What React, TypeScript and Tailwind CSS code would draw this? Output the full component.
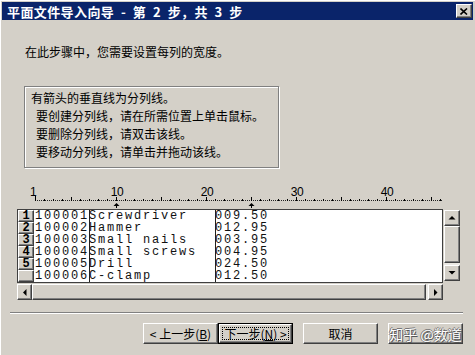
import React from "react";

// Win2000 wizard step 2: fixed-width column break editor

const CJK = "font-['Noto_Sans_CJK_SC',sans-serif]";
const RAISED =
  "border border-t-white border-l-white border-r-[#404040] border-b-[#404040] shadow-[inset_-1px_-1px_0_#808080]";

const ROWS = [
  "100001Screwdriver   009.50",
  "100002Hammer        012.95",
  "100003Small nails   003.95",
  "100004Small screws  004.95",
  "100005Drill         024.50",
  "100006C-clamp       012.50",
];

const colX = (n: number) => 35 + (n - 1) * 9;

function Ruler() {
  const ticks = Array.from({ length: 46 }, (_, i) => i + 1);
  return (
    <svg width={460} height={25} className="block">
      {[1, 10, 20, 30, 40].map((n) => (
        <text
          key={n}
          x={n === 1 ? colX(n) - 2 : colX(n) + 1}
          y={12}
          textAnchor="middle"
          fontSize={12}
          letterSpacing={-0.5}
          fontFamily="'Liberation Sans', sans-serif"
          fill="#000"
        >
          {n}
        </text>
      ))}
      <line x1={35} y1={16.5} x2={442} y2={16.5} stroke="#222" strokeWidth={1} strokeDasharray="1 1" />
      {ticks.map((n) => {
        const h = n === 1 ? 4 : n % 5 === 0 ? 3 : 1;
        const x = colX(n) + 0.5;
        return <line key={n} x1={x} y1={17} x2={x} y2={16 - h} stroke="#000" strokeWidth={1} />;
      })}
      {[colX(10), colX(25)].map((x) => (
        <g key={x} fill="#000">
          <polygon points={`${x - 2.5},22 ${x + 3.5},22 ${x + 0.5},19`} />
          <rect x={x} y={21} width={1} height={3} />
        </g>
      ))}
    </svg>
  );
}

function Arrow({ dir }: { dir: "up" | "down" | "left" | "right" }) {
  const pts = {
    up: "1.5,5.5 8.5,5.5 5,2",
    down: "1.5,2 8.5,2 5,5.5",
    left: "5.5,1 5.5,8 2,4.5",
    right: "2,1 2,8 5.5,4.5",
  }[dir];
  const w = dir === "up" || dir === "down" ? 10 : 8;
  const h = dir === "up" || dir === "down" ? 8 : 9;
  return (
    <svg width={w} height={h} viewBox={`0 0 ${w} ${h}`}>
      <polygon points={pts} fill="#000" />
    </svg>
  );
}

function ScrollBtn({ dir, className }: { dir: "up" | "down" | "left" | "right"; className: string }) {
  return (
    <div className={`${RAISED} bg-[#d4d0c8] flex items-center justify-center ${className}`}>
      <Arrow dir={dir} />
    </div>
  );
}

function DataGrid() {
  return (
    <div className="flex ml-[17px]">
      <div className="w-[426px] h-[74px] border border-[#404040] bg-white flex">
        {/* row headers */}
        <div className="w-[16px] flex flex-col">
          {ROWS.map((_, i) => (
            <div
              key={i}
              className={`${RAISED} h-[12px] bg-[#d4d0c8] flex items-center justify-center font-['Liberation_Mono',monospace] font-bold text-[12px] leading-[10px] text-black`}
            >
              {i < 5 ? i + 1 : ""}
            </div>
          ))}
        </div>
        {/* data */}
        <div className="relative flex-1 pl-[1px] font-['Liberation_Mono',monospace] text-[12px] tracking-[1.8px] leading-[12px] text-[#111] whitespace-pre">
          {ROWS.map((r) => (
            <div key={r} className="h-[12px]">
              {r}
            </div>
          ))}
          <div className="absolute top-0 bottom-0 left-[55px] w-px bg-[#202020]" />
          <div className="absolute top-0 bottom-0 left-[181px] w-px bg-[#202020]" />
        </div>
      </div>
      {/* vertical scrollbar */}
      <div className="ml-px mt-px w-[16px] flex flex-col">
        <ScrollBtn dir="up" className="h-[16px]" />
        <div className={`${RAISED} h-[37px] bg-[#d4d0c8]`} />
        <div className="h-[2px] bg-[#ebe9e4]" />
        <ScrollBtn dir="down" className="h-[16px]" />
      </div>
    </div>
  );
}

function Button({
  children,
  isDefault,
  className = "",
}: {
  children: React.ReactNode;
  isDefault?: boolean;
  className?: string;
}) {
  if (isDefault) {
    return (
      <div className="w-[75px] h-[21px] border border-black">
        <div className={`${RAISED} h-full bg-[#d4d0c8] p-[2px]`}>
          <div className={`h-full border border-dotted border-black flex items-center justify-center text-[12px] leading-none text-black whitespace-pre ${CJK}`}>
            {children}
          </div>
        </div>
      </div>
    );
  }
  return (
    <div
      className={`${RAISED} w-[75px] h-[21px] bg-[#d4d0c8] flex items-center justify-center text-[12px] leading-none text-black whitespace-pre ${CJK} ${className}`}
    >
      {children}
    </div>
  );
}

export default function App() {
  return (
    <div className={`w-[475px] h-[355px] bg-[#d4d0c8] overflow-hidden shadow-[inset_1px_1px_0_#fff] ${CJK}`}>
      {/* Title bar */}
      <div className="mx-[2px] mt-[2px] h-[18px] bg-[#0a246a] flex items-center justify-between pl-[5px] pr-px">
        <span className="text-white text-[13px] font-bold leading-none whitespace-pre tracking-[0.4px]">
          平面文件导入向导  -  第  2  步，共  3  步
        </span>
        <div className={`${RAISED} w-[16px] h-[14px] bg-[#d4d0c8] flex items-center justify-center`}>
          <svg width={8} height={7} viewBox="0 0 8 7">
            <path d="M0.5 0.5 L7 6.5 M7 0.5 L0.5 6.5" stroke="#000" strokeWidth={1.6} />
          </svg>
        </div>
      </div>

      <div className="mt-[24px] pl-[25px] text-[12px] leading-[16px] text-black">
        在此步骤中，您需要设置每列的宽度。
      </div>

      {/* Hint group */}
      <div className="mt-[26px] ml-[24px] w-[255px] h-[82px] border border-[#808080] shadow-[inset_1px_1px_0_#fff,1px_1px_0_#fff] pt-[2px] pl-[6px] text-[12px] leading-[18px] text-black">
        <div>有箭头的垂直线为分列线。</div>
        <div className="pl-[5px]">要创建分列线，请在所需位置上单击鼠标。</div>
        <div className="pl-[5px]">要删除分列线，请双击该线。</div>
        <div className="pl-[5px]">要移动分列线，请单击并拖动该线。</div>
      </div>

      <div className="mt-[16px]">
        <Ruler />
      </div>

      <DataGrid />

      {/* horizontal scrollbar */}
      <div className="ml-[17px] mt-px w-[426px] h-[16px] flex">
        <ScrollBtn dir="left" className="w-[15px]" />
        <div className={`${RAISED} flex-1 bg-[#d4d0c8]`} />
        <div className="w-[2px] bg-[#ebe9e4]" />
        <ScrollBtn dir="right" className="w-[15px]" />
      </div>

      {/* separator */}
      <div className="mt-[12px] ml-[10px] w-[453px] border-t border-t-[#808080] border-b border-b-white" />

      {/* buttons */}
      <div className="mt-[9px] pl-[143px] flex">
        <Button>
          &lt; 上一步(<span className="underline">B</span>)
        </Button>
        <Button isDefault>
          下一步(<span className="underline">N</span>) &gt;
        </Button>
        <div className="w-[10px]" />
        <Button>取消</Button>
        <div className="w-[10px]" />
        <Button className="text-[14px] text-white [text-shadow:1px_1px_0_#555,-1px_0_0_#777,0_-1px_0_#777]">
          知乎 @数道
        </Button>
      </div>
    </div>
  );
}
